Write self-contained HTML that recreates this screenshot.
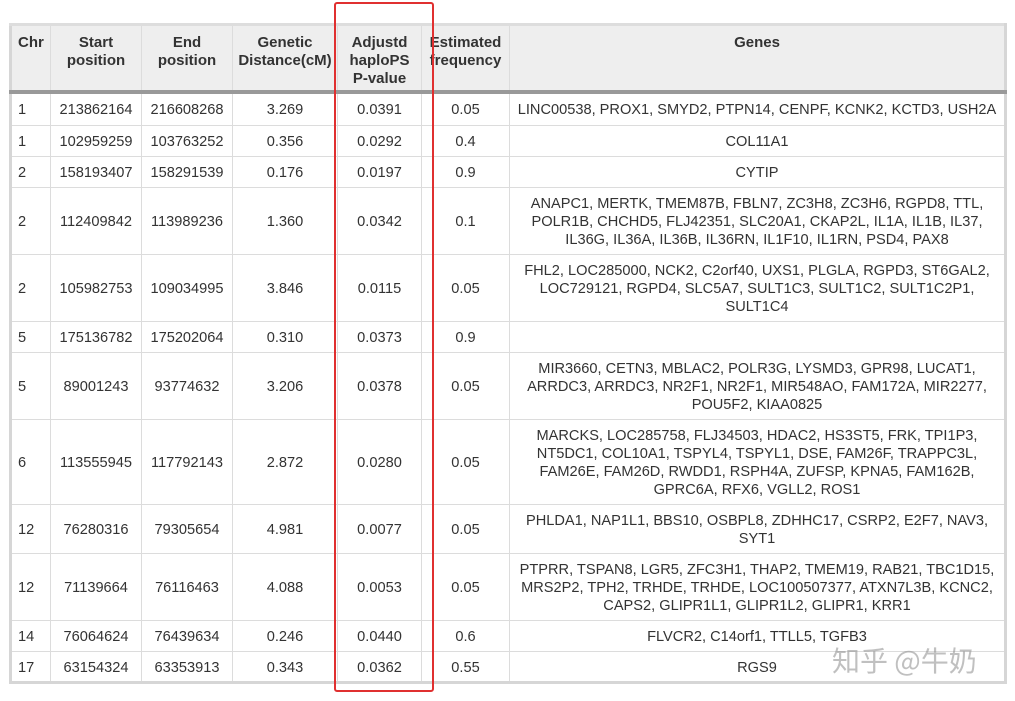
<!DOCTYPE html>
<html><head><meta charset="utf-8"><style>
html,body{margin:0;padding:0;background:#fff;width:1015px;height:701px;overflow:hidden;position:relative}
table{position:absolute;left:9px;top:23px;border-collapse:collapse;table-layout:fixed;width:998px;font-family:"Liberation Sans",sans-serif;font-size:14.6px;color:#333;border:3px solid #d6d6d6;border-top:3px solid #ddd}
td,th{border:1px solid #dcdcdc;padding:0 3px;line-height:18px;text-align:center;overflow:hidden;white-space:nowrap}
td{padding-top:2px}
th{background:#eeeeee;vertical-align:top;padding-top:8px;font-weight:bold;font-size:15px;color:#333}
thead tr{border-bottom:4px solid #999}
td:first-child{text-align:left;padding-left:6px}
th:first-child{text-align:left;padding-left:6px}
.box{position:absolute;left:334px;top:2px;width:96px;height:686px;border:2px solid #e03030;border-radius:3px}
.wm{position:absolute;left:832px;top:640px;font-family:"Noto Sans CJK SC",sans-serif;font-size:28px;color:rgba(150,150,150,0.6)}
</style></head><body>
<table>
<colgroup><col style="width:40px"><col style="width:91px"><col style="width:91px"><col style="width:105px"><col style="width:84px"><col style="width:88px"><col></colgroup>
<thead><tr style="height:67px"><th>Chr</th><th>Start<br>position</th><th>End<br>position</th><th>Genetic<br>Distance(cM)</th><th>Adjustd<br>haploPS<br>P-value</th><th>Estimated<br>frequency</th><th>Genes</th></tr></thead>
<tbody>
<tr style="height:34px"><td>1</td><td>213862164</td><td>216608268</td><td>3.269</td><td>0.0391</td><td>0.05</td><td>LINC00538, PROX1, SMYD2, PTPN14, CENPF, KCNK2, KCTD3, USH2A</td></tr>
<tr style="height:31px"><td>1</td><td>102959259</td><td>103763252</td><td>0.356</td><td>0.0292</td><td>0.4</td><td>COL11A1</td></tr>
<tr style="height:31px"><td>2</td><td>158193407</td><td>158291539</td><td>0.176</td><td>0.0197</td><td>0.9</td><td>CYTIP</td></tr>
<tr style="height:67px"><td>2</td><td>112409842</td><td>113989236</td><td>1.360</td><td>0.0342</td><td>0.1</td><td>ANAPC1, MERTK, TMEM87B, FBLN7, ZC3H8, ZC3H6, RGPD8, TTL,<br>POLR1B, CHCHD5, FLJ42351, SLC20A1, CKAP2L, IL1A, IL1B, IL37,<br>IL36G, IL36A, IL36B, IL36RN, IL1F10, IL1RN, PSD4, PAX8</td></tr>
<tr style="height:67px"><td>2</td><td>105982753</td><td>109034995</td><td>3.846</td><td>0.0115</td><td>0.05</td><td>FHL2, LOC285000, NCK2, C2orf40, UXS1, PLGLA, RGPD3, ST6GAL2,<br>LOC729121, RGPD4, SLC5A7, SULT1C3, SULT1C2, SULT1C2P1,<br>SULT1C4</td></tr>
<tr style="height:31px"><td>5</td><td>175136782</td><td>175202064</td><td>0.310</td><td>0.0373</td><td>0.9</td><td></td></tr>
<tr style="height:67px"><td>5</td><td>89001243</td><td>93774632</td><td>3.206</td><td>0.0378</td><td>0.05</td><td>MIR3660, CETN3, MBLAC2, POLR3G, LYSMD3, GPR98, LUCAT1,<br>ARRDC3, ARRDC3, NR2F1, NR2F1, MIR548AO, FAM172A, MIR2277,<br>POU5F2, KIAA0825</td></tr>
<tr style="height:85px"><td>6</td><td>113555945</td><td>117792143</td><td>2.872</td><td>0.0280</td><td>0.05</td><td>MARCKS, LOC285758, FLJ34503, HDAC2, HS3ST5, FRK, TPI1P3,<br>NT5DC1, COL10A1, TSPYL4, TSPYL1, DSE, FAM26F, TRAPPC3L,<br>FAM26E, FAM26D, RWDD1, RSPH4A, ZUFSP, KPNA5, FAM162B,<br>GPRC6A, RFX6, VGLL2, ROS1</td></tr>
<tr style="height:49px"><td>12</td><td>76280316</td><td>79305654</td><td>4.981</td><td>0.0077</td><td>0.05</td><td>PHLDA1, NAP1L1, BBS10, OSBPL8, ZDHHC17, CSRP2, E2F7, NAV3,<br>SYT1</td></tr>
<tr style="height:67px"><td>12</td><td>71139664</td><td>76116463</td><td>4.088</td><td>0.0053</td><td>0.05</td><td>PTPRR, TSPAN8, LGR5, ZFC3H1, THAP2, TMEM19, RAB21, TBC1D15,<br>MRS2P2, TPH2, TRHDE, TRHDE, LOC100507377, ATXN7L3B, KCNC2,<br>CAPS2, GLIPR1L1, GLIPR1L2, GLIPR1, KRR1</td></tr>
<tr style="height:31px"><td>14</td><td>76064624</td><td>76439634</td><td>0.246</td><td>0.0440</td><td>0.6</td><td>FLVCR2, C14orf1, TTLL5, TGFB3</td></tr>
<tr style="height:31px"><td>17</td><td>63154324</td><td>63353913</td><td>0.343</td><td>0.0362</td><td>0.55</td><td>RGS9</td></tr>
</tbody></table>
<div class="wm">知乎 @牛奶</div>
<div class="box"></div>
</body></html>
